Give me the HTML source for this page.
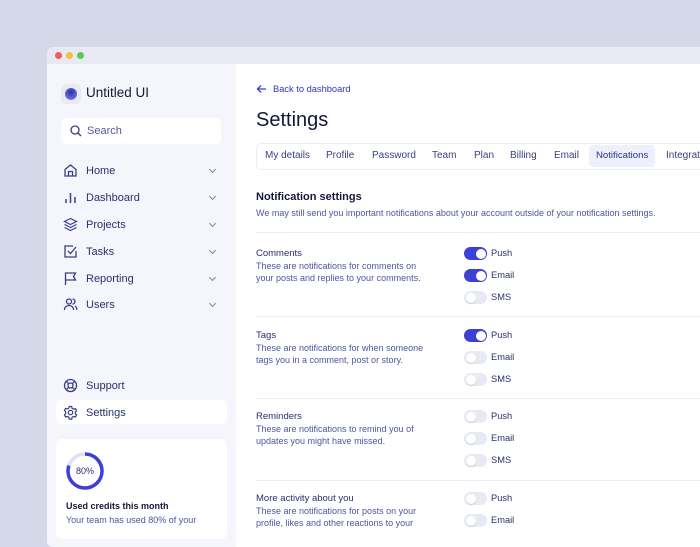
<!DOCTYPE html><html><head><style>
*{margin:0;padding:0;box-sizing:border-box}
body{width:700px;height:525px;background:#d4d9e9;font-family:"Liberation Sans",sans-serif;position:relative;overflow:hidden}
.win{position:absolute;left:47px;top:47px;width:700px;height:500px;background:#fff;border-radius:6px;overflow:hidden}
.bar{height:17px;background:#e7eaf3;position:relative}
.dot{position:absolute;top:5px;width:7px;height:7px;border-radius:50%}
.side{position:absolute;left:0;top:17px;width:189px;height:500px;background:#f5f6fb}
.a{position:absolute;white-space:nowrap}
.nav{color:#2b2f6b;font-size:11px}
.chev{position:absolute;width:5px;height:5px;border-right:1.1px solid #7b7fb5;border-bottom:1.1px solid #7b7fb5;transform:rotate(45deg)}
.tab{position:absolute;top:150px;font-size:10px;color:#3a3f80}
.t{position:absolute;font-size:9.5px;color:#2b2f6b}
.d{position:absolute;font-size:9px;color:#4f54a0;line-height:12px}
.tg{position:absolute;left:464px;width:23px;height:13px;border-radius:7px;background:#e8eaf3}
.tg::after{content:"";position:absolute;top:1.5px;left:1.5px;width:10px;height:10px;border-radius:50%;background:#fff;box-shadow:0 1px 1px rgba(0,0,0,.15)}
.tg.on{background:#3d3fd6}.tg.on::after{left:11.5px}
.tl{position:absolute;left:491px;font-size:9.3px;color:#2b2f6b}
.sep{position:absolute;left:256px;width:444px;height:1px;background:#eceef3}
</style></head><body>
<div class="win">
<div class="bar"><div class="dot" style="left:8px;background:#ef5d58"></div><div class="dot" style="left:19px;background:#f6bd3b"></div><div class="dot" style="left:30px;background:#5fc454"></div></div>
<div class="side"></div>
</div>
<div class="a" style="left:61px;top:84px;width:20px;height:20px;border-radius:5px;background:#e9eaf2"></div>
<div class="a" style="left:65px;top:88px;width:12px;height:12px;border-radius:50%;background:radial-gradient(circle at 50% 35%,#2a2fb0,#6d70d0 70%,#d6d8ef)"></div>
<div class="a" style="left:86px;top:85px;font-size:13.5px;color:#15173a">Untitled UI</div>
<div class="a" style="left:61px;top:118px;width:160px;height:26px;background:#fff;border-radius:5px"></div>
<svg class="a" style="left:70px;top:125px" width="12" height="12" viewBox="0 0 12 12" fill="none" stroke="#3a3f80" stroke-width="1.3"><circle cx="5" cy="5" r="4"/><path d="M8 8l3 3"/></svg>
<div class="a nav" style="left:87px;top:125px;color:#5559a0">Search</div>

<svg class="a" style="left:63px;top:163px" width="15" height="15" viewBox="0 0 15 15" fill="none" stroke="#3a3f80" stroke-width="1.3"><path d="M2 6.5L7.5 2 13 6.5V13H2z M5.5 13V8.5h4V13"/></svg>
<div class="a nav" style="left:86px;top:165px">Home</div><div class="chev" style="left:210px;top:167px"></div>
<svg class="a" style="left:63px;top:190px" width="15" height="15" viewBox="0 0 15 15" fill="none" stroke="#3a3f80" stroke-width="1.5"><path d="M3 13V9M7.5 13V3M12 13V7"/></svg>
<div class="a nav" style="left:86px;top:192px">Dashboard</div><div class="chev" style="left:210px;top:194px"></div>
<svg class="a" style="left:63px;top:217px" width="15" height="15" viewBox="0 0 15 15" fill="none" stroke="#3a3f80" stroke-width="1.2"><path d="M7.5 1.5L13.5 4.5 7.5 7.5 1.5 4.5z M1.5 7.5l6 3 6-3 M1.5 10.5l6 3 6-3"/></svg>
<div class="a nav" style="left:86px;top:219px">Projects</div><div class="chev" style="left:210px;top:221px"></div>
<svg class="a" style="left:63px;top:244px" width="15" height="15" viewBox="0 0 15 15" fill="none" stroke="#3a3f80" stroke-width="1.3"><path d="M13 7v6H2V2h8 M5 7l2.5 2.5L13 3"/></svg>
<div class="a nav" style="left:86px;top:246px">Tasks</div><div class="chev" style="left:210px;top:248px"></div>
<svg class="a" style="left:63px;top:271px" width="15" height="15" viewBox="0 0 15 15" fill="none" stroke="#3a3f80" stroke-width="1.3"><path d="M2.5 14V2h10l-2 3.5 2 3.5h-10"/></svg>
<div class="a nav" style="left:86px;top:273px">Reporting</div><div class="chev" style="left:210px;top:275px"></div>
<svg class="a" style="left:63px;top:297px" width="15" height="15" viewBox="0 0 15 15" fill="none" stroke="#3a3f80" stroke-width="1.3"><circle cx="6" cy="4.5" r="2.5"/><path d="M1.5 13c0-3 2-4.5 4.5-4.5s4.5 1.5 4.5 4.5 M9.5 2a2.5 2.5 0 010 5 M12 9c1.2.7 1.8 2 1.8 4"/></svg>
<div class="a nav" style="left:86px;top:299px">Users</div><div class="chev" style="left:210px;top:301px"></div>

<svg class="a" style="left:63px;top:378px" width="15" height="15" viewBox="0 0 15 15" fill="none" stroke="#3a3f80" stroke-width="1.3"><circle cx="7.5" cy="7.5" r="6"/><circle cx="7.5" cy="7.5" r="2.5"/><path d="M3.3 3.3l2.4 2.4M11.7 3.3L9.3 5.7M3.3 11.7l2.4-2.4M11.7 11.7L9.3 9.3"/></svg>
<div class="a nav" style="left:86px;top:380px">Support</div>
<div class="a" style="left:56px;top:400px;width:171px;height:24px;background:#fff;border-radius:5px"></div>
<svg class="a" style="left:63px;top:405px" width="15" height="15" viewBox="0 0 15 15" fill="none" stroke="#3a3f80" stroke-width="1.2"><circle cx="7.5" cy="7.5" r="2.2"/><path d="M6.3 1.5h2.4l.4 1.8 1.6.9 1.7-.6 1.2 2.1-1.3 1.2v1.8l1.3 1.2-1.2 2.1-1.7-.6-1.6.9-.4 1.8H6.3l-.4-1.8-1.6-.9-1.7.6-1.2-2.1 1.3-1.2V6.6L1.4 5.4l1.2-2.1 1.7.6 1.6-.9z"/></svg>
<div class="a nav" style="left:86px;top:407px">Settings</div>
<div class="a" style="left:56px;top:439px;width:171px;height:100px;background:#fff;border-radius:6px"></div>
<svg class="a" style="left:65px;top:451px" width="40" height="40" viewBox="0 0 40 40" fill="none" stroke-width="3.5"><circle cx="20" cy="20" r="17" stroke="#dde2f6"/><circle cx="20" cy="20" r="17" stroke="#3d3fd6" stroke-dasharray="85.5 107" transform="rotate(-90 20 20)"/></svg>
<div class="a" style="left:76px;top:466px;font-size:9px;color:#2b2f6b">80%</div>
<div class="a" style="left:66px;top:501px;font-size:9px;color:#15173a;font-weight:bold">Used credits this month</div>
<div class="a" style="left:66px;top:515px;font-size:9px;color:#4f54a0">Your team has used 80% of your</div>

<svg class="a" style="left:256px;top:84px" width="11" height="10" viewBox="0 0 11 10" fill="none" stroke="#3d3fd6" stroke-width="1.3"><path d="M10 5H1.5M5 1.5L1.5 5 5 8.5"/></svg>
<div class="a" style="left:273px;top:84px;font-size:9.3px;color:#3234b8">Back to dashboard</div>
<div class="a" style="left:256px;top:109px;font-size:20px;color:#15173a">Settings</div>
<div class="a" style="left:256px;top:143px;width:460px;height:27px;border:1px solid #eceef3;border-radius:5px"></div>
<div class="a" style="left:589px;top:145px;width:66px;height:22px;background:#eef1fd;border-radius:4px"></div>
<div class="tab" style="left:265px">My details</div><div class="tab" style="left:326px">Profile</div><div class="tab" style="left:372px">Password</div><div class="tab" style="left:432px">Team</div><div class="tab" style="left:474px">Plan</div><div class="tab" style="left:510px">Billing</div><div class="tab" style="left:554px">Email</div><div class="tab" style="left:596px;color:#2b2f8a;font-size:9.6px">Notifications</div><div class="tab" style="left:666px">Integrati</div>
<div class="a" style="left:256px;top:191px;font-size:11px;color:#15173a;font-weight:bold">Notification settings</div>
<div class="a" style="left:256px;top:208px;font-size:9px;color:#4f54a0">We may still send you important notifications about your account outside of your notification settings.</div>
<div class="sep" style="top:232px"></div>

<div class="t" style="left:256px;top:248px">Comments</div>
<div class="d" style="left:256px;top:260px">These are notifications for comments on<br>your posts and replies to your comments.</div>
<div class="tg on" style="top:247px"></div><div class="tl" style="top:248px">Push</div>
<div class="tg on" style="top:269px"></div><div class="tl" style="top:270px">Email</div>
<div class="tg" style="top:291px"></div><div class="tl" style="top:292px">SMS</div>
<div class="sep" style="top:316px"></div>
<div class="t" style="left:256px;top:330px">Tags</div>
<div class="d" style="left:256px;top:342px">These are notifications for when someone<br>tags you in a comment, post or story.</div>
<div class="tg on" style="top:329px"></div><div class="tl" style="top:330px">Push</div>
<div class="tg" style="top:351px"></div><div class="tl" style="top:352px">Email</div>
<div class="tg" style="top:373px"></div><div class="tl" style="top:374px">SMS</div>
<div class="sep" style="top:398px"></div>
<div class="t" style="left:256px;top:411px">Reminders</div>
<div class="d" style="left:256px;top:423px">These are notifications to remind you of<br>updates you might have missed.</div>
<div class="tg" style="top:410px"></div><div class="tl" style="top:411px">Push</div>
<div class="tg" style="top:432px"></div><div class="tl" style="top:433px">Email</div>
<div class="tg" style="top:454px"></div><div class="tl" style="top:455px">SMS</div>
<div class="sep" style="top:480px"></div>
<div class="t" style="left:256px;top:493px">More activity about you</div>
<div class="d" style="left:256px;top:505px">These are notifications for posts on your<br>profile, likes and other reactions to your</div>
<div class="tg" style="top:492px"></div><div class="tl" style="top:493px">Push</div>
<div class="tg" style="top:514px"></div><div class="tl" style="top:515px">Email</div>
</body></html>
